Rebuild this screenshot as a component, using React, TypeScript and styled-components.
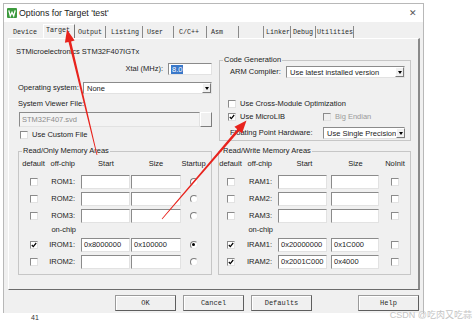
import React from 'react';
import styled, { createGlobalStyle, css } from 'styled-components';

const GlobalStyle = createGlobalStyle`
  html, body { margin: 0; padding: 0; background: #ffffff; }
  body {
    width: 474px;
    height: 322px;
    overflow: hidden;
    font-family: "Liberation Sans", Arial, sans-serif;
  }
  * { box-sizing: border-box; }
`;

const SANS = `"Liberation Sans", Arial, sans-serif`;
const MONO = `"Liberation Mono", "DejaVu Sans Mono", monospace`;

const Screen = styled.div`
  position: relative;
  width: 474px;
  height: 322px;
  overflow: hidden;
  background: #ffffff;
  padding: 3px 0 0 3px;
`;

const Window = styled.div`
  width: 421px;
  height: 310px;
  background: #f0f0f0;
  border: 1px solid #b8b8b8;
  border-bottom: none;
  display: flex;
  flex-direction: column;
`;

const TitleBar = styled.div`
  height: 18px;
  flex: none;
  background: #ffffff;
  display: flex;
  align-items: center;
  padding: 0 6px 0 3px;
`;

const TitleText = styled.span`
  margin-left: 2px;
  font-family: ${SANS};
  font-size: 8.8px;
  color: #1a1a1a;
  white-space: nowrap;
`;

const CloseGlyph = styled.span`
  margin-left: auto;
  font-family: ${SANS};
  font-size: 9px;
  color: #555;
  line-height: 1;
`;

const Body = styled.div`
  display: flex;
  flex-direction: column;
  padding: 2px 0 0 4px;
`;

const TabStrip = styled.div`
  display: flex;
  align-items: flex-end;
  height: 14px;
`;

const Tab = styled.div<{ $w: number; $pl: number; $sep?: boolean; $active?: boolean }>`
  flex: none;
  width: ${(p) => p.$w}px;
  height: 12px;
  padding-left: ${(p) => p.$pl}px;
  font-family: ${MONO};
  font-size: 6.7px;
  line-height: 12px;
  color: #2a2a2a;
  white-space: nowrap;
  overflow: hidden;
  border-right: 1px solid ${(p) => (p.$sep ? '#8a8a8a' : 'transparent')};
  ${(p) =>
    p.$active &&
    css`
      height: 14px;
      line-height: 11px;
      border-top: 1px solid #ffffff;
      border-left: 1px solid #ffffff;
      border-right: 1px solid #777777;
    `}
`;

const TabPage = styled.div`
  width: 412px;
  height: 252px;
  flex: none;
  border-top: 1px solid #ffffff;
  border-left: 1px solid #ffffff;
  border-right: 2px solid #8a8a8a;
  border-bottom: 1px solid #6b6b6b;
  display: flex;
  flex-direction: column;
`;

const TopSection = styled.div`
  display: grid;
  grid-template-columns: 196px 192px;
  column-gap: 7px;
  align-items: start;
  padding: 7px 0 0 7px;
  height: 102px;
`;

const Column = styled.div<{ $mt?: number }>`
  display: flex;
  flex-direction: column;
  margin-top: ${(p) => p.$mt ?? 0}px;
`;

const Line = styled.div<{ $mt?: number; $h: number; $pl?: number; $end?: boolean; $gap?: number }>`
  display: flex;
  align-items: center;
  height: ${(p) => p.$h}px;
  margin-top: ${(p) => p.$mt ?? 0}px;
  padding-left: ${(p) => p.$pl ?? 0}px;
  justify-content: ${(p) => (p.$end ? 'flex-end' : 'flex-start')};
  gap: ${(p) => p.$gap ?? 0}px;
`;

const Label = styled.span<{ $w?: number; $muted?: boolean }>`
  flex: none;
  ${(p) => (p.$w ? `width: ${p.$w}px;` : '')}
  font-family: ${SANS};
  font-size: 7.5px;
  line-height: 10px;
  color: ${(p) => (p.$muted ? '#9a9a9a' : '#1c1c1c')};
  white-space: nowrap;
`;

const sunken = css`
  border: 1px solid;
  border-color: #8b8b8b #e2e2e2 #e2e2e2 #8b8b8b;
`;

const TextBox = styled.div<{ $w: number; $h?: number; $disabled?: boolean }>`
  flex: none;
  width: ${(p) => p.$w}px;
  height: ${(p) => p.$h ?? 14}px;
  ${sunken}
  background: ${(p) => (p.$disabled ? '#f3f3f3' : '#ffffff')};
  color: ${(p) => (p.$disabled ? '#8c8c8c' : '#1c1c1c')};
  font-family: ${SANS};
  font-size: 7.5px;
  display: flex;
  align-items: center;
  padding-left: 2px;
  white-space: nowrap;
  overflow: hidden;
`;

const Selected = styled.span`
  background: #3a78c9;
  color: #ffffff;
  padding: 0 1px;
  line-height: 9px;
`;

const SelectBox = styled.div<{ $w: number }>`
  flex: none;
  width: ${(p) => p.$w}px;
  height: 12px;
  ${sunken}
  background: #ffffff;
  font-family: ${SANS};
  font-size: 7.5px;
  color: #1c1c1c;
  display: flex;
  align-items: center;
  justify-content: space-between;
  padding: 0 0 0 3px;
  white-space: nowrap;
`;

const DropButton = styled.span`
  flex: none;
  width: 9px;
  height: 10px;
  background: #f0f0f0;
  border: 1px solid;
  border-color: #ffffff #7a7a7a #7a7a7a #ffffff;
  display: flex;
  align-items: center;
  justify-content: center;
  &::after {
    content: '';
    border-left: 2.5px solid transparent;
    border-right: 2.5px solid transparent;
    border-top: 3px solid #000000;
  }
`;

const BrowseButton = styled.span`
  flex: none;
  width: 12px;
  height: 15px;
  background: #f0f0f0;
  border: 1px solid;
  border-color: #ffffff #7d7d7d #7d7d7d #ffffff;
`;

const Box = styled.span<{ $disabled?: boolean }>`
  flex: none;
  width: 8px;
  height: 8px;
  ${sunken}
  background: ${(p) => (p.$disabled ? '#f0f0f0' : '#ffffff')};
  display: inline-flex;
  align-items: center;
  justify-content: center;
`;

const RadioDot = styled.span<{ $on?: boolean }>`
  flex: none;
  width: 8px;
  height: 8px;
  border-radius: 50%;
  border: 1px solid;
  border-color: #7d7d7d #ececec #ececec #7d7d7d;
  background: #ffffff;
  display: inline-flex;
  align-items: center;
  justify-content: center;
  &::after {
    content: '';
    width: 3px;
    height: 3px;
    border-radius: 50%;
    background: ${(p) => (p.$on ? '#000000' : 'transparent')};
  }
`;

const CheckItem = styled.div<{ $w?: number }>`
  display: flex;
  align-items: center;
  gap: 4px;
  ${(p) => (p.$w ? `width: ${p.$w}px; flex: none;` : '')}
`;

const Group = styled.fieldset<{ $pb?: number }>`
  margin: 0;
  min-width: 0;
  padding: 0 0 ${(p) => p.$pb ?? 1}px 0;
  border: 1px solid #c6c6c6;
  display: flex;
  flex-direction: column;
`;

const GroupTitle = styled.legend`
  margin-left: 3px;
  padding: 0 1px;
  font-family: ${SANS};
  font-size: 7.5px;
  line-height: 10px;
  color: #1c1c1c;
`;

const MemorySection = styled.div`
  display: grid;
  grid-template-columns: 194px 193px;
  column-gap: 6px;
  margin-top: 5px;
  padding-left: 9px;
`;

const MemRow = styled.div<{ $cols: string; $h: number; $mt?: number; $mb?: number }>`
  display: grid;
  grid-template-columns: ${(p) => p.$cols};
  height: ${(p) => p.$h}px;
  margin-top: ${(p) => p.$mt ?? 0}px;
  margin-bottom: ${(p) => p.$mb ?? 0}px;
`;

const Cell = styled.div<{ $align?: 'center' | 'right' | 'left'; $pr?: number }>`
  display: flex;
  align-items: center;
  justify-content: ${(p) =>
    p.$align === 'right' ? 'flex-end' : p.$align === 'left' ? 'flex-start' : 'center'};
  padding-right: ${(p) => p.$pr ?? 0}px;
  min-width: 0;
`;

const ButtonRow = styled.div`
  display: flex;
  gap: 7px;
  height: 16px;
  margin-top: 5px;
  padding: 0 4px 0 107px;
`;

const DlgButton = styled.div<{ $push?: boolean }>`
  flex: none;
  width: 61px;
  height: 16px;
  background: #f0f0f0;
  border: 1px solid;
  border-color: #9a9a9a #5e5e5e #5e5e5e #9a9a9a;
  box-shadow: inset 1px 1px 0 #ffffff;
  font-family: ${MONO};
  font-size: 7px;
  color: #2a2a2a;
  display: flex;
  align-items: center;
  justify-content: center;
  ${(p) => (p.$push ? 'margin-left: auto;' : '')}
`;

const Footer = styled.div`
  height: 9px;
  padding-left: 28px;
  font-family: ${SANS};
  font-size: 7px;
  line-height: 9px;
  color: #333;
`;

const Watermark = styled.div`
  position: absolute;
  right: 2px;
  bottom: 2px;
  font-family: "Liberation Sans", "Noto Sans CJK SC", sans-serif;
  font-size: 9px;
  line-height: 10px;
  color: #c4c4c4;
  white-space: nowrap;
`;

const Overlay = styled.svg`
  position: absolute;
  left: 0;
  top: 0;
  pointer-events: none;
`;

/* ---------- pieces ---------- */

const Check = ({ on, disabled }: { on?: boolean; disabled?: boolean }) => (
  <Box $disabled={disabled}>
    {on && (
      <svg width="6" height="6" viewBox="0 0 6 6">
        <path d="M0.8 3 L2.3 4.6 L5.2 1" stroke="#000" strokeWidth="1.2" fill="none" />
      </svg>
    )}
  </Box>
);

const Select = ({ w, value }: { w: number; value: string }) => (
  <SelectBox $w={w}>
    <span>{value}</span>
    <DropButton />
  </SelectBox>
);

const AppIcon = () => (
  <svg width="10" height="10" viewBox="0 0 10 10">
    <rect x="0" y="0" width="10" height="10" rx="1" fill="#3d9a3d" />
    <path d="M1.8 2.3 L3.3 7.8 L5 4.2 L6.7 7.8 L8.2 2.3" stroke="#ffffff" strokeWidth="1.3" fill="none" />
  </svg>
);

type MemEntry =
  | { kind: 'row'; name: string; def?: boolean; start?: string; size?: string; last?: boolean }
  | { kind: 'sub' };

const romRows: MemEntry[] = [
  { kind: 'row', name: 'ROM1:' },
  { kind: 'row', name: 'ROM2:' },
  { kind: 'row', name: 'ROM3:' },
  { kind: 'sub' },
  { kind: 'row', name: 'IROM1:', def: true, start: '0x8000000', size: '0x100000', last: true },
  { kind: 'row', name: 'IROM2:' },
];

const ramRows: MemEntry[] = [
  { kind: 'row', name: 'RAM1:' },
  { kind: 'row', name: 'RAM2:' },
  { kind: 'row', name: 'RAM3:' },
  { kind: 'sub' },
  { kind: 'row', name: 'IRAM1:', def: true, start: '0x20000000', size: '0x1C000' },
  { kind: 'row', name: 'IRAM2:', def: true, start: '0x2001C000', size: '0x4000' },
];

type MemProps = {
  title: string;
  cols: string;
  lastHeader: string;
  startW: number;
  sizeW: number;
  rows: MemEntry[];
  radio: boolean;
};

const MemoryGroup = ({ title, cols, lastHeader, startW, sizeW, rows, radio }: MemProps) => (
  <Group $pb={4}>
    <GroupTitle>{title}</GroupTitle>
    <MemRow $cols={cols} $h={10} $mt={3} $mb={4}>
      <Cell><Label>default</Label></Cell>
      <Cell $align="right" $pr={6}><Label>off-chip</Label></Cell>
      <Cell><Label>Start</Label></Cell>
      <Cell><Label>Size</Label></Cell>
      <Cell $pr={radio ? 5 : 0}><Label>{lastHeader}</Label></Cell>
    </MemRow>
    {rows.map((r, i) =>
      r.kind === 'sub' ? (
        <MemRow key={i} $cols={cols} $h={12}>
          <Cell />
          <Cell $align="right" $pr={5}><Label>on-chip</Label></Cell>
        </MemRow>
      ) : (
        <MemRow key={i} $cols={cols} $h={17}>
          <Cell><Check on={r.def} /></Cell>
          <Cell $align="right" $pr={6}><Label>{r.name}</Label></Cell>
          <Cell $align="left"><TextBox $w={startW}>{r.start ?? ''}</TextBox></Cell>
          <Cell $align="left"><TextBox $w={sizeW}>{r.size ?? ''}</TextBox></Cell>
          <Cell $pr={radio ? 5 : 0}>{radio ? <RadioDot $on={r.last} /> : <Check />}</Cell>
        </MemRow>
      )
    )}
  </Group>
);

const tabs = [
  { label: 'Device', w: 35, pl: 5 },
  { label: 'Target', w: 32, pl: 2, active: true },
  { label: 'Output', w: 31, pl: 3, sep: true },
  { label: 'Listing', w: 37, pl: 5, sep: true },
  { label: 'User', w: 31, pl: 4, sep: true },
  { label: 'C/C++', w: 33, pl: 5, sep: true },
  { label: 'Asm', w: 32, pl: 4, sep: true },
  { label: '', w: 25, pl: 0, sep: true },
  { label: 'Linker', w: 27, pl: 2, sep: true },
  { label: 'Debug', w: 25, pl: 2, sep: true },
  { label: 'Utilities', w: 38, pl: 1, sep: true },
];

export default function App() {
  return (
    <>
      <GlobalStyle />
      <Screen>
        <Window>
          <TitleBar>
            <AppIcon />
            <TitleText>Options for Target 'test'</TitleText>
            <CloseGlyph>✕</CloseGlyph>
          </TitleBar>
          <Body>
            <TabStrip>
              {tabs.map((t, i) => (
                <Tab key={i} $w={t.w} $pl={t.pl} $sep={t.sep} $active={t.active}>
                  {t.label}
                </Tab>
              ))}
            </TabStrip>
            <TabPage>
              <TopSection>
                <Column>
                  <Line $h={12}>
                    <Label>STMicroelectronics STM32F407IGTx</Label>
                  </Line>
                  <Line $h={12} $mt={5} $end $gap={5}>
                    <Label>Xtal (MHz):</Label>
                    <TextBox $w={44} $h={12}>
                      <Selected>8.0</Selected>
                    </TextBox>
                  </Line>
                  <Line $h={12} $mt={7} $pl={2}>
                    <Label $w={65}>Operating system:</Label>
                    <Select w={129} value="None" />
                  </Line>
                  <Line $h={12} $mt={4} $pl={2}>
                    <Label>System Viewer File:</Label>
                  </Line>
                  <Line $h={15} $mt={2} $pl={3}>
                    <TextBox $w={181} $h={15} $disabled>
                      STM32F407.svd
                    </TextBox>
                    <BrowseButton />
                  </Line>
                  <Line $h={10} $mt={3} $pl={4}>
                    <CheckItem>
                      <Check />
                      <Label>Use Custom File</Label>
                    </CheckItem>
                  </Line>
                </Column>

                <Column $mt={9}>
                  <Group $pb={1}>
                    <GroupTitle>Code Generation</GroupTitle>
                    <Line $h={12} $mt={1} $pl={10}>
                      <Label $w={56}>ARM Compiler:</Label>
                      <Select w={119} value="Use latest installed version" />
                    </Line>
                    <Line $h={10} $mt={21} $pl={8}>
                      <CheckItem>
                        <Check />
                        <Label>Use Cross-Module Optimization</Label>
                      </CheckItem>
                    </Line>
                    <Line $h={10} $mt={3} $pl={8}>
                      <CheckItem $w={95}>
                        <Check on />
                        <Label>Use MicroLIB</Label>
                      </CheckItem>
                      <CheckItem>
                        <Check disabled />
                        <Label $muted>Big Endian</Label>
                      </CheckItem>
                    </Line>
                    <Line $h={12} $mt={5} $pl={10}>
                      <Label $w={93}>Floating Point Hardware:</Label>
                      <Select w={82} value="Use Single Precision" />
                    </Line>
                  </Group>
                </Column>
              </TopSection>

              <MemorySection>
                <MemoryGroup
                  title="Read/Only Memory Areas"
                  cols="29px 33px 50px 50px 1fr"
                  lastHeader="Startup"
                  startW={49}
                  sizeW={50}
                  rows={romRows}
                  radio
                />
                <MemoryGroup
                  title="Read/Write Memory Areas"
                  cols="23px 36px 53px 49px 1fr"
                  lastHeader="NoInit"
                  startW={49}
                  sizeW={48}
                  rows={ramRows}
                  radio={false}
                />
              </MemorySection>
            </TabPage>

            <ButtonRow>
              <DlgButton>OK</DlgButton>
              <DlgButton>Cancel</DlgButton>
              <DlgButton>Defaults</DlgButton>
              <DlgButton $push>Help</DlgButton>
            </ButtonRow>
          </Body>
        </Window>
        <Footer>41</Footer>
        <Watermark>CSDN @吃肉又吃蒜</Watermark>
        <Overlay width="474" height="322" viewBox="0 0 474 322">
          <polygon
            fill="#e8231d"
            points="97.4,154.9 71.1,41.4 74.6,40.6 67,29.5 64.9,42.8 68.5,42.0 96.6,155.1"
          />
          <polygon
            fill="#e8231d"
            points="162.3,219.3 239.2,131.0 242.0,133.5 246.5,120.5 234.4,126.7 237.2,129.3 161.7,218.7"
          />
        </Overlay>
      </Screen>
    </>
  );
}
